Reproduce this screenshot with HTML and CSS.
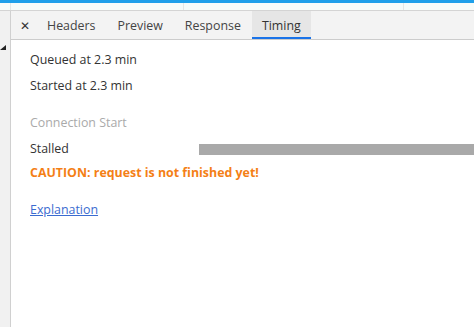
FILE: index.html
```html
<!DOCTYPE html>
<html>
<head>
<meta charset="utf-8">
<link rel="stylesheet" href="styles.css">
</head>
<body>
<div class="topstrip">
  <div class="blue"></div>
  <div class="pale">
    <span class="tick t1"></span><span class="tick t2"></span><span class="tick t3"></span>
  </div>
</div>
<div class="main">
  <div class="gutter"><div class="tri"></div></div>
  <div class="panel">
    <div class="tabs">
      <div class="close">✕</div>
      <div class="tab">Headers</div>
      <div class="tab">Preview</div>
      <div class="tab">Response</div>
      <div class="tab active">Timing</div>
    </div>
    <div class="content">
      <div class="line">Queued at 2.3 min</div>
      <div class="line">Started at 2.3 min</div>
      <div class="section">Connection Start</div>
      <div class="row">
        <div class="label">Stalled</div>
        <div class="bar"></div>
      </div>
      <div class="caution">CAUTION: request is not finished yet!</div>
      <a class="link" href="#">Explanation</a>
    </div>
  </div>
</div>
</body>
</html>
```
FILE: styles.css
```css
html, body { margin: 0; padding: 0; }
body {
  width: 474px; height: 327px; overflow: hidden;
  font-family: "Open Sans", "Noto Sans", sans-serif;
  font-size: 12.4px; color: #333; background: #fff;
}
.topstrip { height: 11px; display: flex; flex-direction: column; }
.blue { height: 3px; background: #1ea0ea; }
.pale { flex: 1; background: #f6fcfa; border-bottom: 1px solid #d4d4d4; display: flex; }
.tick { width: 1px; background: #e4e8e6; }
.t1 { margin-left: 10px; }
.t2 { margin-left: 172px; }
.t3 { margin-left: 219px; }
.main { display: flex; height: 316px; }
.gutter { width: 10px; background: #f1f1f1; border-right: 1px solid #d0d0d0; position: relative; }
.tri {
  position: absolute; left: 0; top: 34px; width: 0; height: 0;
  border-left: 6px solid transparent; border-bottom: 5px solid #222;
}
.panel { flex: 1; display: flex; flex-direction: column; }
.tabs {
  height: 28px; background: #f3f3f3; border-bottom: 1px solid #cccccc;
  display: flex; align-items: stretch;
}
.close { width: 22px; margin-left: 3px; display: flex; align-items: center; justify-content: center; font-size: 12px; color: #333; }
.tab { padding: 0 11px; display: flex; align-items: center; color: #444; }
.tab.active { padding: 0 10px; background: #e6e6e6; box-shadow: inset 0 -2px 0 #1a73e8; color: #333; }
.content { padding: 10px 0 0 19px; display: flex; flex-direction: column; align-items: flex-start; }
.line { height: 26px; line-height: 20px; }
.section { margin-top: 11px; height: 26px; line-height: 20px; color: #aaa; }
.row { display: flex; align-self: stretch; height: 24px; align-items: flex-start; }
.label { width: 169px; line-height: 20px; }
.bar { flex: 1; height: 11px; margin-top: 5px; background: #a9a9a9; }
.caution { color: #f47f16; font-weight: bold; line-height: 20px; height: 37px; }
.link { color: #3a6bd0; text-decoration: underline; line-height: 20px; }
```
